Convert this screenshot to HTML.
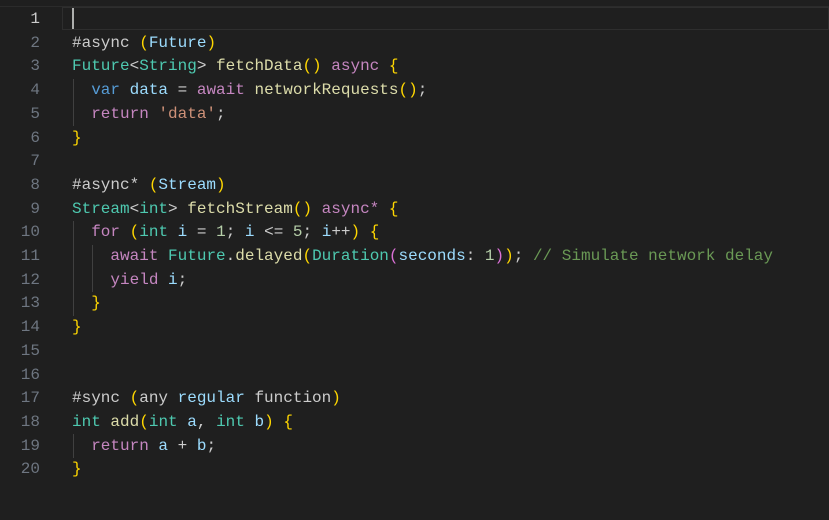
<!DOCTYPE html>
<html><head><meta charset="utf-8"><style>
body{margin:0;width:829px;height:520px;background:#1f1f1f;overflow:hidden;font-family:"Liberation Mono",monospace;font-size:16px;}
.top{position:absolute;left:0;top:0;width:829px;height:6px;border-bottom:1px solid #2b2b2b;}
.cur{position:absolute;left:62px;top:7px;width:767px;height:23px;border:1px solid #2e2e2e;box-sizing:border-box;}
.caret{position:absolute;left:72px;top:8px;width:2px;height:21px;background:#aeafad;}
.ln{position:absolute;left:0;top:8px;width:40px;text-align:right;color:#6e7681;line-height:23.7px;}
.code{position:absolute;left:72px;top:8px;color:#cccccc;line-height:23.7px;white-space:pre;}
.g{position:absolute;width:1px;background:#404040;}
.k{color:#c586c0}.b{color:#569cd6}.v{color:#9cdcfe}.t{color:#4ec9b0}.f{color:#dcdcaa}.s{color:#ce9178}.n{color:#b5cea8}.c{color:#6a9955}
.y{color:#ffd700}.p{color:#da70d6}.q{color:#179fff}
</style></head><body>
<div class="top"></div><div class="cur"></div><div class="caret"></div>
<div class="g" style="left:73px;top:79px;height:47px"></div>
<div class="g" style="left:73px;top:221px;height:95px"></div>
<div class="g" style="left:92px;top:245px;height:47px"></div>
<div class="g" style="left:73px;top:434px;height:24px"></div>
<div class="ln"><span style="color:#cccccc">1</span><br>2<br>3<br>4<br>5<br>6<br>7<br>8<br>9<br>10<br>11<br>12<br>13<br>14<br>15<br>16<br>17<br>18<br>19<br>20</div>
<div class="code"> 
#async <span class="y">(</span><span class="v">Future</span><span class="y">)</span>
<span class="t">Future</span>&lt;<span class="t">String</span>&gt; <span class="f">fetchData</span><span class="y">()</span> <span class="k">async</span> <span class="y">{</span>
  <span class="b">var</span> <span class="v">data</span> = <span class="k">await</span> <span class="f">networkRequests</span><span class="y">()</span>;
  <span class="k">return</span> <span class="s">'data'</span>;
<span class="y">}</span>

#async* <span class="y">(</span><span class="v">Stream</span><span class="y">)</span>
<span class="t">Stream</span>&lt;<span class="t">int</span>&gt; <span class="f">fetchStream</span><span class="y">()</span> <span class="k">async*</span> <span class="y">{</span>
  <span class="k">for</span> <span class="y">(</span><span class="t">int</span> <span class="v">i</span> = <span class="n">1</span>; <span class="v">i</span> &lt;= <span class="n">5</span>; <span class="v">i</span>++<span class="y">)</span> <span class="y">{</span>
    <span class="k">await</span> <span class="t">Future</span>.<span class="f">delayed</span><span class="y">(</span><span class="t">Duration</span><span class="p">(</span><span class="v">seconds</span>: <span class="n">1</span><span class="p">)</span><span class="y">)</span>; <span class="c">// Simulate network delay</span>
    <span class="k">yield</span> <span class="v">i</span>;
  <span class="y">}</span>
<span class="y">}</span>


#sync <span class="y">(</span>any <span class="v">regular</span> function<span class="y">)</span>
<span class="t">int</span> <span class="f">add</span><span class="y">(</span><span class="t">int</span> <span class="v">a</span>, <span class="t">int</span> <span class="v">b</span><span class="y">)</span> <span class="y">{</span>
  <span class="k">return</span> <span class="v">a</span> + <span class="v">b</span>;
<span class="y">}</span></div>
</body></html>
